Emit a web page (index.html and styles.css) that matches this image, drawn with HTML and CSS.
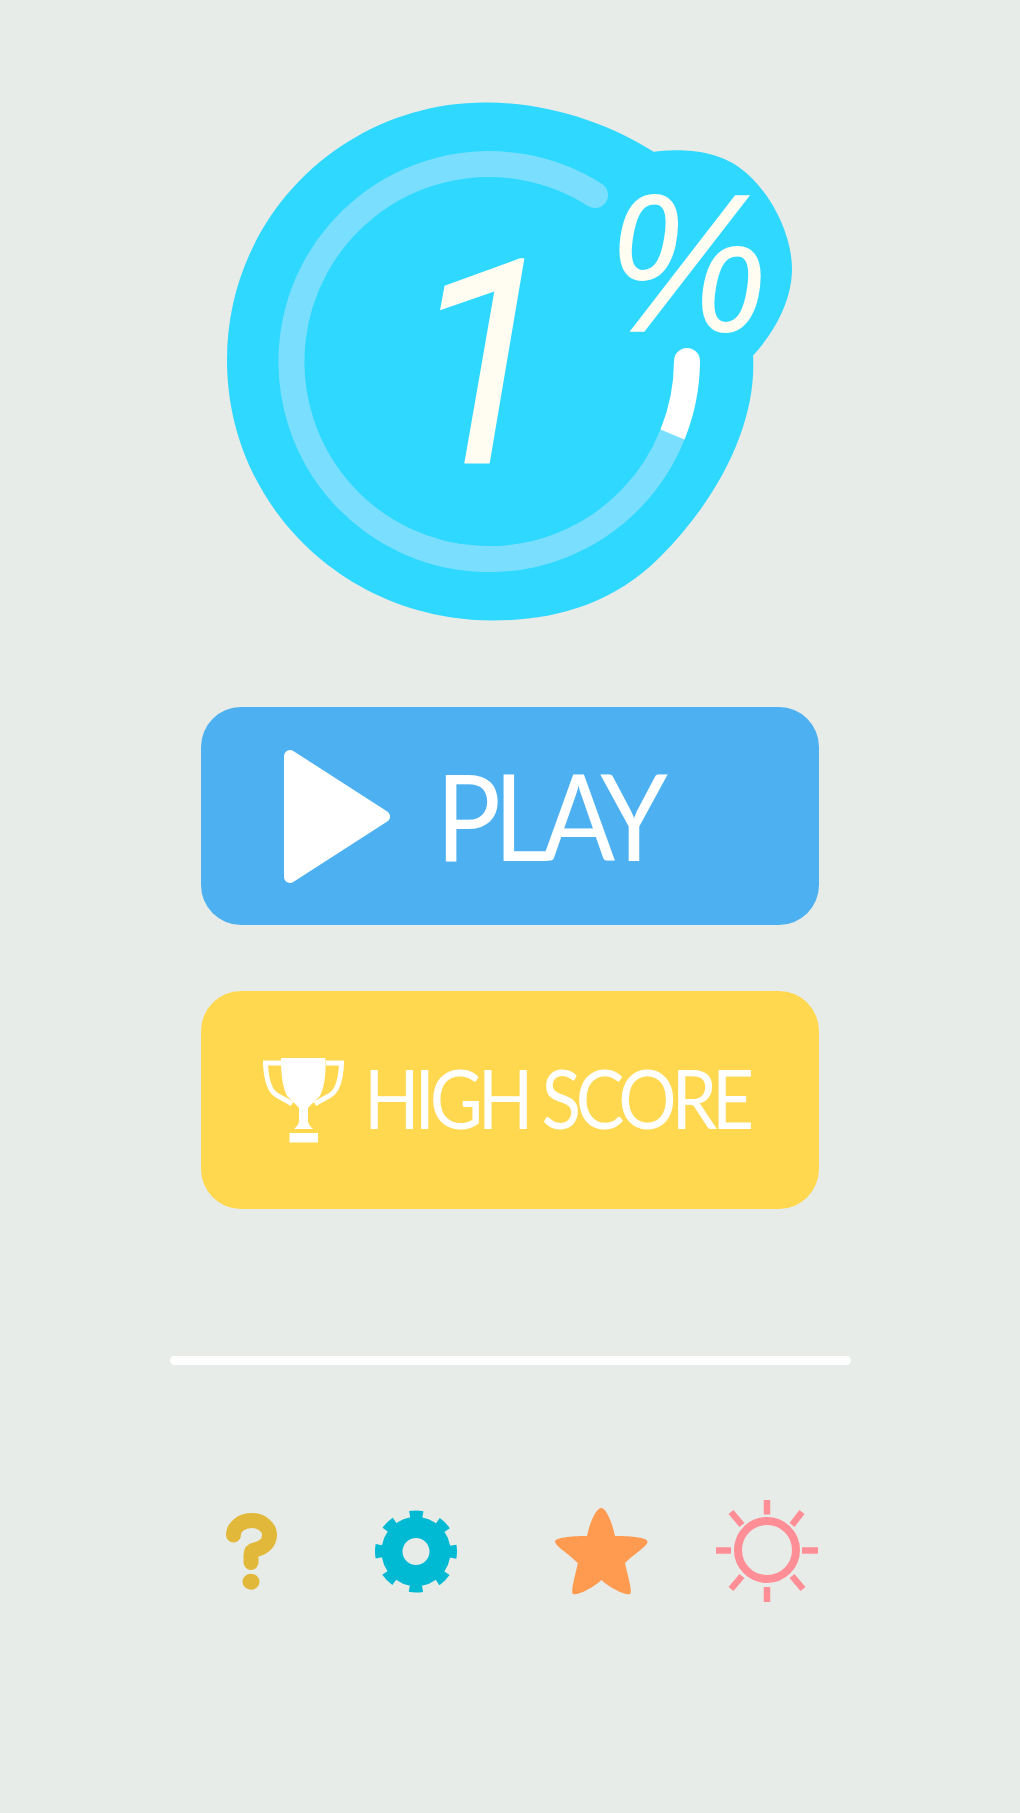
FILE: index.html
```html
<!DOCTYPE html>
<html lang="en">

<head>
    <meta charset="UTF-8">
    <meta name="viewport" content="width=device-width, initial-scale=1.0">
    <title>1%</title>
    <link rel="stylesheet" href="styles.css">
</head>

<body>
    <div class="menu">
        <!-- viewBox uses page coordinates so the shapes are easy to compare -->
        <svg class="logo" viewBox="200 80 620 570">
            <path class="logo-blob" d="M485 102.5C548 102 610 124 654 152C668 150 710 146 740 168C768 188 792 232 792 269C792 300 775 332 753 355.5C757 420 722 495 660 557C610 607 550 620.5 492 620.5C345 620 227 505 227 360C227 215 345 102.5 485 102.5Z" />
            <path class="logo-track" d="M595 195A197.5 197.5 0 1 0 672.5 434.5" />
            <path class="logo-fill" d="M672.5 434.5A197.5 197.5 0 0 0 687 361" />
            <circle class="logo-cap" cx="687" cy="361" r="13" />
            <text class="logo-num" x="405" y="463.5">1</text>
            <text class="logo-pct" x="606.5" y="332" textLength="162" lengthAdjust="spacingAndGlyphs">%</text>
        </svg>

        <a class="btn btn-play" href="#">
            <svg class="play-icon" viewBox="0 0 106 133">
                <path d="M6 6L100 66.5L6 127Z" />
            </svg>
            <span class="btn-label">PLAY</span>
        </a>

        <a class="btn btn-score" href="#">
            <svg class="trophy-icon" viewBox="0 0 81 85">
                <path class="trophy-cup" d="M18 0H62.5V3C63 18 61 30 57 38C52 43 48 46 45 50V63C45 66 47 68 50 71H31C34 68 36 66 36 63V50C33 46 29 43 24 38C20 30 18 18 18 3Z" />
                <rect class="trophy-cup" x="26.5" y="75" width="28.5" height="9.5" />
                <path class="trophy-handle" d="M18 5H2.5C3 18 6 30 11 35C15 39 22 41 29 46" />
                <path class="trophy-handle" d="M63 5H78.5C78 18 75 30 70 35C66 39 59 41 52 46" />
            </svg>
            <span class="btn-label">HIGH SCORE</span>
        </a>

        <div class="divider"></div>

        <div class="icons">
            <svg class="icon-help" viewBox="0 0 51 77">
                <path d="M7.5 22C7.5 14 15.6 7.5 25.5 7.5C35.4 7.5 43.5 14 43.5 22C43.5 30 37 35 30 36.5C26.5 37.2 25 39 25 42V49.5" />
                <ellipse cx="25" cy="68.7" rx="8.5" ry="8" />
            </svg>
            <svg class="icon-gear" viewBox="0 0 82 83">
                <circle class="gear-body" cx="41" cy="41.5" r="24" />
                <circle class="gear-teeth" cx="41" cy="41.5" r="37" />
            </svg>
            <svg class="icon-star" viewBox="0 0 93 87">
                <path d="M46.4 0C51 0 57 14 60 28C72 28 92 29 92.5 33.5C93 38 80 45 70 55C72 65 78 84 75 86C71 88 55 80 46.4 72C38 80 22 88 18 86C15 84 21 65 22.8 55C13 45 0 38 0 33.5C0.5 29 21 28 32 28C35 14 41 0 46.4 0Z" />
            </svg>
            <svg class="icon-sun" viewBox="0 0 102 102">
                <circle cx="51" cy="50" r="29" />
                <path d="M51 0V14.5M51 87V102M0 50.5H15M86 50.5H102M26 25L15 12M76 25L86 12M26 76L15 89M76 76L87 89" />
            </svg>
        </div>
    </div>
</body>

</html>
```

FILE: styles.css
```css
body {
    margin: 0;
    background: #e7ece8;
    font-family: "Lato", sans-serif;
}

.menu {
    display: flex;
    flex-direction: column;
    align-items: center;
    padding-top: 80px;
    min-height: 1733px;
}

.logo {
    display: block;
    width: 620px;
    height: 570px;
}

.logo-blob {
    fill: #2fd8ff;
}

.logo-track {
    fill: none;
    stroke: #7adfff;
    stroke-width: 26;
    stroke-linecap: round;
}

.logo-fill {
    fill: none;
    stroke: #ffffff;
    stroke-width: 26;
}

.logo-cap {
    fill: #ffffff;
}

.logo-num,
.logo-pct {
    font-style: italic;
    fill: #fffcf2;
}

.logo-num {
    font-family: "Roboto", sans-serif;
    font-size: 287px;
}

.logo-pct {
    font-family: "Liberation Sans", sans-serif;
    font-size: 198px;
}

.btn {
    display: flex;
    align-items: center;
    box-sizing: border-box;
    width: 618px;
    height: 218px;
    border-radius: 40px;
    color: #ffffff;
    text-decoration: none;
}

.btn-label {
    white-space: nowrap;
    transform: scaleX(0.9);
    transform-origin: left center;
}

.btn-play {
    margin-top: 57px;
    padding-left: 83px;
    background: #4db1f1;
    font-size: 120px;
    letter-spacing: -8px;
}

.btn-play .btn-label {
    margin-bottom: 3px;
}

.btn-score {
    margin-top: 66px;
    padding-left: 62px;
    background: #ffd84f;
    font-size: 81px;
    letter-spacing: -5.8px;
}

.btn-score .btn-label {
    margin-bottom: 6px;
}

.play-icon {
    width: 106px;
    height: 133px;
    margin-right: 46px;
}

.play-icon path {
    fill: #ffffff;
    stroke: #ffffff;
    stroke-width: 12;
    stroke-linejoin: round;
}

.trophy-icon {
    width: 81px;
    height: 85px;
    margin-right: 20px;
}

.trophy-cup {
    fill: #ffffff;
}

.trophy-handle {
    fill: none;
    stroke: #ffffff;
    stroke-width: 5;
}

.divider {
    width: 681px;
    height: 9px;
    margin-top: 147px;
    border-radius: 5px;
    background: #ffffff;
}

.icons {
    display: flex;
    align-items: center;
    gap: 98px;
    width: 592px;
    margin-top: 135px;
    margin-left: 24px;
}

.icons svg {
    flex: none;
}

.icon-help {
    width: 51px;
    height: 77px;
}

.icon-help path {
    fill: none;
    stroke: #e2b83a;
    stroke-width: 15;
    stroke-linecap: round;
}

.icon-help ellipse {
    fill: #e2b83a;
}

.icon-gear {
    width: 82px;
    height: 83px;
}

.gear-body {
    fill: none;
    stroke: #00bad4;
    stroke-width: 21;
}

.gear-teeth {
    fill: none;
    stroke: #00bad4;
    stroke-width: 8;
    stroke-dasharray: 13 16.06;
    stroke-dashoffset: 6.5;
}

.icon-star {
    width: 93px;
    height: 87px;
}

.icon-star path {
    fill: #ff9b50;
}

.icon-sun {
    width: 102px;
    height: 102px;
    margin-left: -30px;
}

.icon-sun circle {
    fill: none;
    stroke: #ff8e96;
    stroke-width: 8;
}

.icon-sun path {
    fill: none;
    stroke: #ff8e96;
    stroke-width: 6.5;
}
```
